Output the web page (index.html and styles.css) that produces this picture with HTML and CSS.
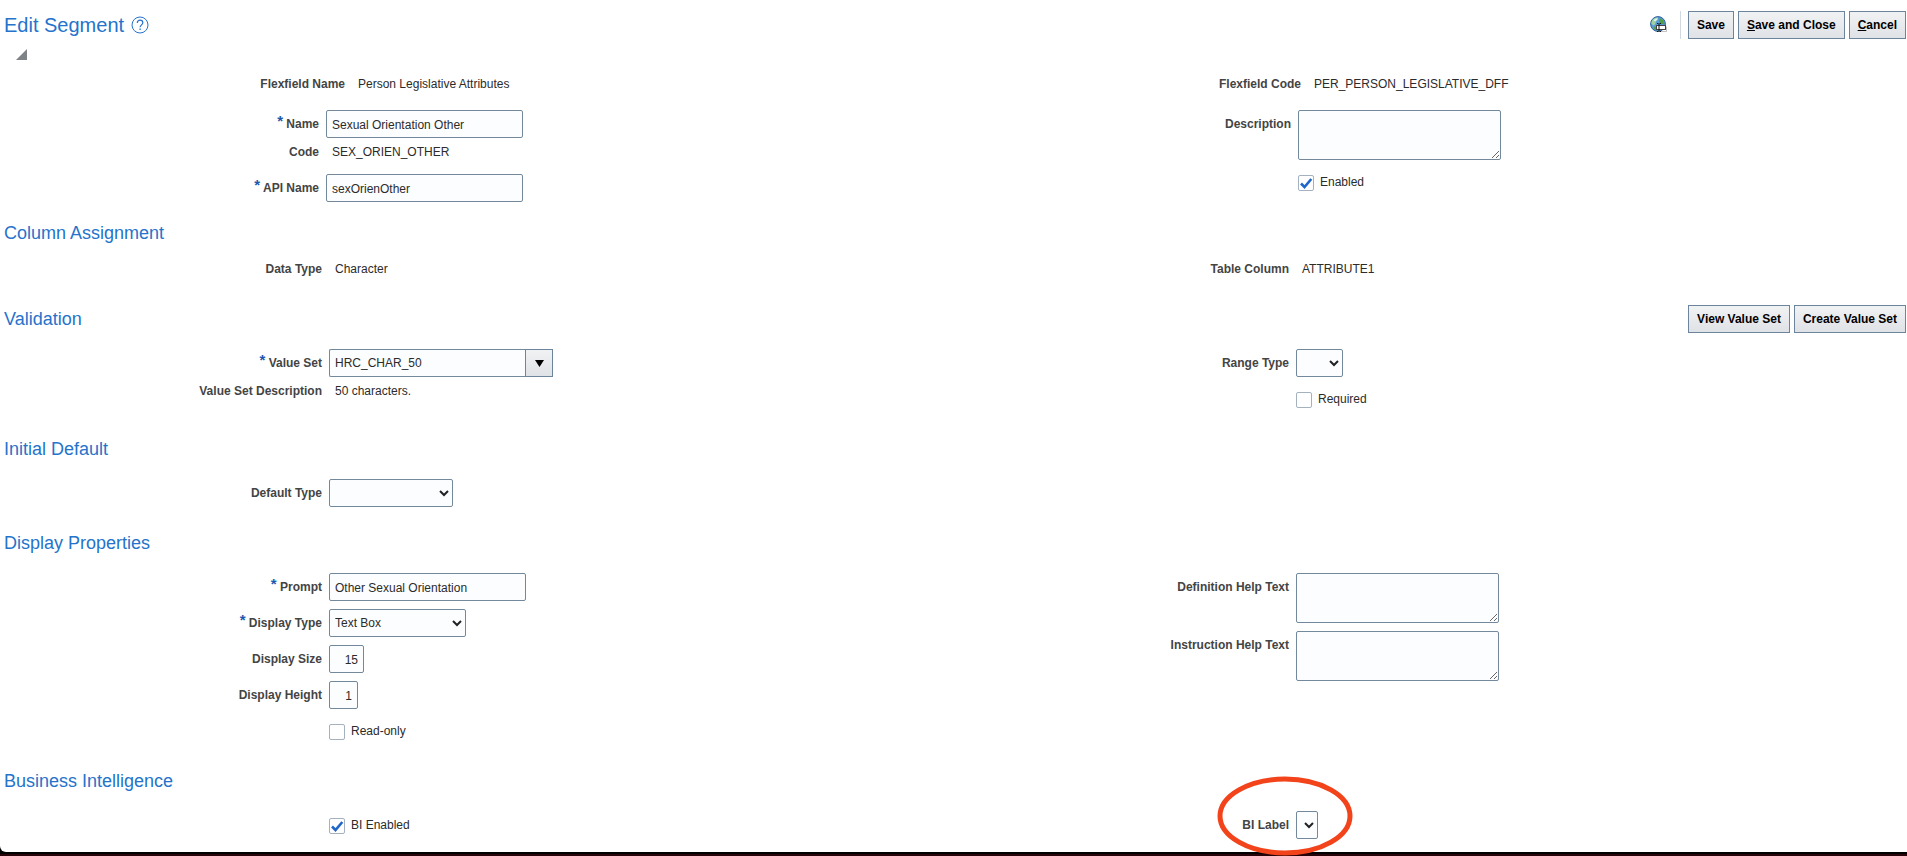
FILE: index.html
```html
<!DOCTYPE html>
<html lang="en">
<head>
	<meta charset="UTF-8">
	<title>Edit Segment</title>
	<link rel="stylesheet" href="styles.css">
</head>
<body>
<form class="page">
	<div class="header">
		<h1>Edit Segment</h1>
		<a href="#" class="help" aria-label="Help">
			<svg width="18" height="18" viewBox="0 0 18 18" fill="none" stroke="#2573cb">
				<circle cx="9" cy="9" r="8"/>
				<path d="M6.3 7.1C6.3 5.3 7.4 4.2 9.1 4.2s2.7 1 2.7 2.5c0 2.1-2.7 2.3-2.7 4.6" stroke-width="1.2"/>
				<path d="M9.1 12.6v1.5" stroke-width="1.3"/>
			</svg>
		</a>
		<div class="actions">
			<a href="#" class="globe" aria-label="Translations">
				<svg width="17" height="17" viewBox="0 0 17 17">
					<circle cx="8" cy="8" r="7.4" fill="#5b9bd8" stroke="#2f5f9c"/>
					<path d="M2.2 4.2C3.6 2.2 6 1.2 8 1.5L7.6 4 5.6 5.5 5.4 8 3.4 9.4 1.3 7.6z" fill="#9fd4a0"/>
					<path d="M9.5 2l3.6 2 1.6 3.4-3.2.8-2.4-2.4z" fill="#4f9f4b"/>
					<path d="M3.4 10.4l3 .6.2 3.4-2.2-1z" fill="#4f9f4b"/>
					<path d="M3.6 4.4l2.2-2 2.2.2-2.6 3z" fill="#dff2f8"/>
					<path d="M7 15.5h9.5v-5" stroke="#999" stroke-opacity=".6" fill="none"/>
					<rect x="6.5" y="9.5" width="9" height="4" fill="#fff" stroke="#444"/>
					<path d="M7 7.5h1.5M9.5 7.5H11M9 8v7M7 15.5h1.5M9.5 15.5H11" stroke="#111" fill="none"/>
				</svg>
			</a>
			<div class="buttons">
				<button type="button">Save</button>
				<button type="button"><u>S</u>ave and Close</button>
				<button type="button"><u>C</u>ancel</button>
			</div>
		</div>
	</div>

	<a href="#" class="disclosure" aria-label="Collapse">
		<svg width="11" height="11" viewBox="0 0 11 11"><path d="M11 0v11H0z" fill="#7f8287"/></svg>
	</a>

	<!-- flexfield -->
	<div class="cols cols-flex">
		<div class="row">
			<span class="label">Flexfield Name</span>
			<span class="text">Person Legislative Attributes</span>
		</div>
		<div class="row">
			<span class="label">Flexfield Code</span>
			<span class="text">PER_PERSON_LEGISLATIVE_DFF</span>
		</div>
	</div>

	<!-- name -->
	<div class="cols cols-name">
		<div class="col">
			<div class="row">
				<label class="label" for="name"><span class="req">*</span> Name</label>
				<input type="text" class="input" id="name" value="Sexual Orientation Other">
			</div>
			<div class="row row-text">
				<span class="label">Code</span>
				<span class="text">SEX_ORIEN_OTHER</span>
			</div>
			<div class="row">
				<label class="label" for="apiName"><span class="req">*</span> API Name</label>
				<input type="text" class="input" id="apiName" value="sexOrienOther">
			</div>
		</div>
		<div class="col">
			<div class="row">
				<label class="label" for="description">Description</label>
				<textarea class="input area" id="description"></textarea>
			</div>
			<div class="row">
				<span class="label"></span>
				<label class="check"><input type="checkbox" checked>Enabled</label>
			</div>
		</div>
	</div>

	<div class="title title-column">
		<h2>Column Assignment</h2>
	</div>
	<div class="cols">
		<div class="row">
			<span class="label">Data Type</span>
			<span class="text">Character</span>
		</div>
		<div class="row">
			<span class="label">Table Column</span>
			<span class="text">ATTRIBUTE1</span>
		</div>
	</div>

	<div class="title">
		<h2>Validation</h2>
		<div class="buttons">
			<button type="button">View Value Set</button>
			<button type="button">Create Value Set</button>
		</div>
	</div>
	<div class="cols">
		<div class="col">
			<div class="row">
				<label class="label" for="valueSet"><span class="req">*</span> Value Set</label>
				<div class="combo">
					<input type="text" class="input" id="valueSet" value="HRC_CHAR_50">
					<button type="button" aria-label="Search Value Set">
						<svg width="9" height="7" viewBox="0 0 9 7"><path d="M0 0h9L4.5 7z"/></svg>
					</button>
				</div>
			</div>
			<div class="row row-text">
				<span class="label">Value Set Description</span>
				<span class="text">50 characters.</span>
			</div>
		</div>
		<div class="col">
			<div class="row">
				<label class="label" for="rangeType">Range Type</label>
				<select class="input select-range" id="rangeType"><option></option></select>
			</div>
			<div class="row">
				<span class="label"></span>
				<label class="check"><input type="checkbox">Required</label>
			</div>
		</div>
	</div>

	<div class="title">
		<h2>Initial Default</h2>
	</div>
	<div class="cols">
		<div class="row">
			<label class="label" for="defaultType">Default Type</label>
			<select class="input select-default" id="defaultType"><option></option></select>
		</div>
	</div>

	<div class="title">
		<h2>Display Properties</h2>
	</div>
	<div class="cols">
		<div class="col">
			<div class="row">
				<label class="label" for="prompt"><span class="req">*</span> Prompt</label>
				<input type="text" class="input" id="prompt" value="Other Sexual Orientation">
			</div>
			<div class="row">
				<label class="label" for="displayType"><span class="req">*</span> Display Type</label>
				<select class="input select-display" id="displayType"><option>Text Box</option></select>
			</div>
			<div class="row">
				<label class="label" for="displaySize">Display Size</label>
				<input type="text" class="input num num-size" id="displaySize" value="15">
			</div>
			<div class="row">
				<label class="label" for="displayHeight">Display Height</label>
				<input type="text" class="input num num-height" id="displayHeight" value="1">
			</div>
			<div class="row">
				<span class="label"></span>
				<label class="check"><input type="checkbox">Read-only</label>
			</div>
		</div>
		<div class="col">
			<div class="row">
				<label class="label" for="definitionHelp">Definition Help Text</label>
				<textarea class="input area" id="definitionHelp"></textarea>
			</div>
			<div class="row">
				<label class="label" for="instructionHelp">Instruction Help Text</label>
				<textarea class="input area" id="instructionHelp"></textarea>
			</div>
		</div>
	</div>

	<div class="title">
		<h2>Business Intelligence</h2>
	</div>
	<div class="cols">
		<div class="row">
			<span class="label"></span>
			<label class="check"><input type="checkbox" checked>BI Enabled</label>
		</div>
		<div class="row marked">
			<label class="label" for="biLabel">BI Label</label>
			<select class="input select-bi" id="biLabel"><option></option></select>
			<svg class="mark" width="136" height="80" viewBox="0 0 136 80"><ellipse cx="68" cy="40" rx="65" ry="37" fill="none" stroke="#f2431b" stroke-width="5"/></svg>
		</div>
	</div>
</form>
</body>
</html>
```
FILE: styles.css
```css
body,form,h1,h2,button,input,select,textarea{margin:0;padding:0}
*{box-sizing:border-box}
html{
    background:#000;
}
body{
    background:linear-gradient(#000 2px,#26040a 2px) bottom/100% 4px no-repeat #000;
    padding-bottom:4px;
    overflow:hidden;
}
body,button,input,select,textarea{
    font:12px/16px "Liberation Sans", Arial, Helvetica, sans-serif;
    color:#2b2b2b;
}
svg{display:block;}
input,select,textarea{outline:none;}

.page{
    background:#fff;
    padding:10px 1px 13px 0;
    border-bottom-left-radius:6px;
}

/* header */
.header{
    display:flex;
    align-items:center;
    height:29px;
    padding-left:4px;
}
h1,h2{
    font-weight:normal;
    color:#2573cb;
}
h1{
    font-size:20px;
    line-height:28px;
}
h2{
    font-size:18px;
    line-height:28px;
}
.help{
    margin-left:7px;
}
.actions{
    display:flex;
    align-items:center;
    margin-left:auto;
}
.globe{
    padding-right:13px;
}
.actions .buttons{
    border-left:1px solid #d0d8e0;
    padding-left:7px;
}
.buttons{
    display:flex;
    gap:4px;
}
button{
    height:28px;
    padding:0 8px;
    border:1px solid #6c859c;
    background:linear-gradient(#f1f2f4,#dfe2e6);
    color:#000;
    font-weight:bold;
    cursor:pointer;
}
.disclosure{
    display:block;
    padding:10px 0 10px 16px;
}

/* section titles */
.title{
    display:flex;
    justify-content:space-between;
    margin:22px 0 16px;
    padding-left:4px;
}
.title-column{
    margin:17px 0 8px;
}

/* form layout */
.cols{
    display:grid;
    grid-template-columns:967fr 939fr;
}
.cols-flex{
    grid-template-columns:956fr 950fr;
    margin-bottom:12px;
}
.cols-name{
    grid-template-columns:972fr 934fr;
}
.row{
    display:flex;
    align-items:flex-start;
    gap:7px;
    min-height:28px;
}
.row + .row{
    margin-top:8px;
}
.cols > .row,
.col .row-text{
    margin-top:0;
}
.label{
    flex:none;
    width:322px;
    line-height:28px;
    text-align:right;
    font-weight:bold;
    color:#444;
}
.cols-flex .label{
    width:345px;
}
.cols-name .label{
    width:319px;
}
.req{
    font-size:15px;
    line-height:1;
    color:#1c58ad;
    vertical-align:2px;
}
.text{
    line-height:28px;
    padding-left:6px;
}

/* fields */
.input{
    width:197px;
    height:28px;
    padding:2px 5px 0;
    border:1px solid #73899b;
    border-radius:2px;
    background:#fcfdff;
}
.area{
    width:203px;
    height:50px;
    resize:both;
}
.num{
    text-align:right;
}
.num-size{width:35px;}
.num-height{width:29px;}
select.input{
    appearance:none;
    padding:0 5px;
    background:#fcfdff url("data:image/svg+xml,%3Csvg xmlns='http://www.w3.org/2000/svg' width='10' height='7'%3E%3Cpath d='M1 1l4 4 4-4' fill='none' stroke='%23222' stroke-width='2'/%3E%3C/svg%3E") right 3px center no-repeat;
}
.select-range{width:47px;}
.select-default{width:124px;}
.select-display{width:137px;}
select.select-bi{
    width:22px;
    padding:0;
}
.combo{
    display:flex;
}
.combo .input{
    width:196px;
    border-right:0;
    border-radius:2px 0 0 2px;
    padding-top:0;
}
.combo button{
    display:flex;
    align-items:center;
    justify-content:center;
    width:28px;
    padding:0;
}
.check{
    display:flex;
    align-items:center;
    gap:6px;
    height:28px;
}
.check input{
    appearance:none;
    width:16px;
    height:16px;
    margin-top:2px;
    border:1px solid #a3b1c0;
    border-radius:2px;
    background:#fff;
}
.check input:checked{
    background:#fff url("data:image/svg+xml,%3Csvg xmlns='http://www.w3.org/2000/svg' width='14' height='14'%3E%3Cpath d='M2 7.5l3.5 3.5L12.3 3' fill='none' stroke='%231f66c8' stroke-width='2.6'/%3E%3C/svg%3E") center no-repeat;
}

/* hand-drawn ring over the BI Label field */
.marked{
    position:relative;
}
.mark{
    position:absolute;
    left:250px;
    top:-35px;
    pointer-events:none;
}
```
